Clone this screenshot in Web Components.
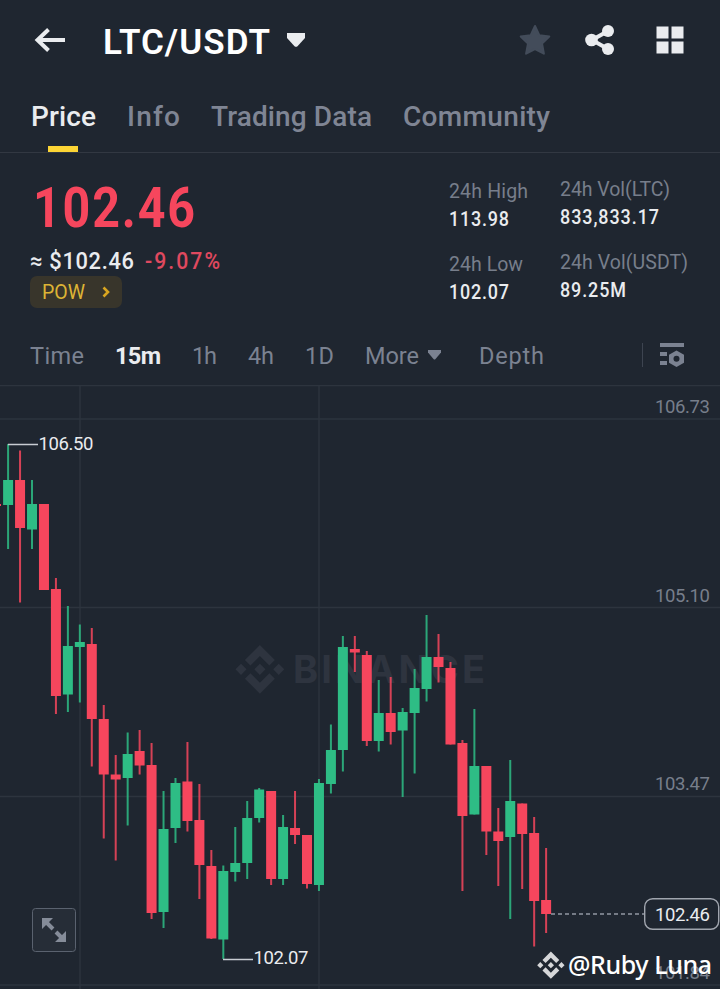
<!DOCTYPE html>
<html lang="en">
<head>
<meta charset="utf-8">
<title>LTC/USDT</title>
<style>
  body {
    margin: 0;
    background: #1f2630;
    font-family: Roboto, "Liberation Sans", sans-serif;
  }
</style>
</head>
<body>
<pair-screen></pair-screen>
<script>
// Text set to a given width: the slack goes between the letters.
// "condense" narrows the glyphs themselves.
class FitText extends HTMLElement {
  constructor() {
    super();
    this.attachShadow({ mode: "open" });
  }

  connectedCallback() {
    this.shadowRoot.innerHTML = `
      <style>
        :host {
          display: block;
          flex: none;
          white-space: nowrap;
        }

        span {
          display: inline-block;
          transform-origin: 0 50%;
        }
      </style>
      <span></span>
    `;
    const span = this.shadowRoot.querySelector("span");
    const text = this.getAttribute("text");
    const width = Number(this.getAttribute("width"));
    const condense = Number(this.getAttribute("condense") || 1);
    span.textContent = text;
    const natural = span.getBoundingClientRect().width;
    span.style.letterSpacing = `${(width / condense - natural) / (text.length - 1)}px`;
    span.style.transform = condense === 1 ? "none" : `scaleX(${condense})`;
    this.style.width = `${width}px`;
  }
}

const icons = {
  back: [32, 26, `<path d="M31 13H3M14.500 2.500L3.500 13l11 10.500" fill="none" stroke="#eaecef" stroke-width="4"/>`],
  down: [18, 14, `<path d="M0 0h18v5l-7.500 8.200q-1.500 1.300-3 0L0 5z" fill="#eaecef"/>`],
  star: [32, 32, `<path d="M16 2l4.300 9.200 10 1.300-7.300 7 1.900 10.200L16 25l-8.900 4.700L9 19.500l-7.300-7 10-1.300z" fill="#434c5a" stroke="#434c5a" stroke-width="2" stroke-linejoin="round"/>`],
  share: [30, 32, `<path d="M23 7L7 16l16 9" fill="none" stroke="#eaecef" stroke-width="4"/><g fill="#eaecef"><circle cx="23" cy="7" r="6"/><circle cx="6.500" cy="16" r="6.300"/><circle cx="23" cy="25" r="6"/></g>`],
  grid: [28, 28, `<path d="M.500.500h12v12H.500zM15.500.500h12v12h-12zM.500 15.500h12v12H.500zM15.500 15.500h12v12h-12z" fill="#eaecef"/>`],
  chevron: [8, 12, `<path d="M1.500 1.500L6 6l-4.500 4.500" fill="none" stroke="#d9a520" stroke-width="2.600"/>`],
  more: [13, 10, `<path d="M0 0h13v2.500L7.500 9q-1 1-2 0L0 2.500z" fill="#7b8291"/>`],
  settings: [24, 24, `<g fill="#7b8291"><path d="M0 0h24v4H0zM0 9h7v4H0zM0 18h7v4H0z"/><path fill-rule="evenodd" d="M16.500 7.500L24 11.700v8L16.500 24 9 19.700v-8zM16.500 12.700a3 3 0 1 0 0 6 3 3 0 0 0 0-6z"/></g>`],
  expand: [44, 44, `<rect x=".5" y=".5" width="43" height="43" rx="3" fill="#262d37" stroke="#5a626f"/><path d="M12 12l9 9M24 24l8 8" stroke="#858c99" stroke-width="4" fill="none"/><path d="M10 10h11L10 21zM34 34H23l11-11z" fill="#858c99"/>`],
};

class PairIcon extends HTMLElement {
  constructor() {
    super();
    this.attachShadow({ mode: "open" });
  }

  connectedCallback() {
    const [w, h, shape] = icons[this.getAttribute("name")];
    this.shadowRoot.innerHTML = `
      <style>
        :host {
          display: block;
          flex: none;
        }

        svg {
          display: block;
        }
      </style>
      <svg width="${w}" height="${h}" viewBox="0 0 ${w} ${h}">${shape}</svg>
    `;
  }
}

class PairHeader extends HTMLElement {
  constructor() {
    super();
    this.attachShadow({ mode: "open" });
  }

  connectedCallback() {
    this.shadowRoot.innerHTML = `
      <style>
        :host {
          display: flex;
          align-items: center;
          height: 80px;
          padding: 0 36px 0 34px;
        }

        .title {
          margin: 5px 17px 0 37px;
          color: #fff;
          font-size: 35px;
          font-weight: 600;
          line-height: 41px;
        }

        .tools {
          display: flex;
          align-items: center;
          gap: 34px;
          margin-left: auto;
        }
      </style>
      <pair-icon name="back"></pair-icon>
      <fit-text class="title" text="LTC/USDT" width="167"></fit-text>
      <pair-icon name="down"></pair-icon>
      <div class="tools">
        <pair-icon name="star"></pair-icon>
        <pair-icon name="share"></pair-icon>
        <pair-icon name="grid" style="margin-left: 7px"></pair-icon>
      </div>
    `;
  }
}

class PairTabs extends HTMLElement {
  constructor() {
    super();
    this.attachShadow({ mode: "open" });
  }

  connectedCallback() {
    this.shadowRoot.innerHTML = `
      <style>
        :host {
          display: flex;
          gap: 31px;
          box-sizing: border-box;
          height: 73px;
          padding: 20px 0 0 31px;
          border-bottom: 1px solid #323842;
          color: #7f8594;
          font-size: 28px;
          font-weight: 500;
          line-height: 33px;
        }

        .active {
          display: flex;
          flex-direction: column;
          justify-content: space-between;
          color: #eaecef;
        }

        i {
          width: 30px;
          height: 6px;
          margin-left: 17px;
          background: #fcd535;
        }
      </style>
      <div class="active"><fit-text text="Price" width="65"></fit-text><i></i></div>
      <fit-text text="Info" width="53"></fit-text>
      <fit-text text="Trading Data" width="161"></fit-text>
      <fit-text text="Community" width="147"></fit-text>
    `;
  }
}

class PairStat extends HTMLElement {
  constructor() {
    super();
    this.attachShadow({ mode: "open" });
  }

  connectedCallback() {
    const [label, labelWidth, value, valueWidth] = this.getAttribute("data").split("|");
    this.shadowRoot.innerHTML = `
      <style>
        :host {
          display: block;
          line-height: 28px;
        }

        .label {
          color: #777e8b;
          font-size: 19.500px;
        }

        .value {
          color: #eaecef;
          font-size: 19.500px;
          font-weight: 500;
        }
      </style>
      <fit-text class="label" text="${label}" width="${labelWidth}"></fit-text>
      <fit-text class="value" text="${value}" width="${valueWidth}" condense=".92"></fit-text>
    `;
  }
}

class PairSummary extends HTMLElement {
  constructor() {
    super();
    this.attachShadow({ mode: "open" });
  }

  connectedCallback() {
    this.shadowRoot.innerHTML = `
      <style>
        :host {
          display: flex;
          justify-content: space-between;
          box-sizing: border-box;
          height: 172px;
          padding: 22px 32px 0 30px;
        }

        .price {
          margin-left: 3px;
          color: #f6465d;
          font-size: 55px;
          font-weight: 700;
          line-height: 66px;
        }

        .change {
          display: flex;
          gap: 11px;
          margin-top: 6px;
          font-size: 23.500px;
          font-weight: 500;
          line-height: 28px;
          color: #eaecef;
        }

        .down {
          color: #e0495f;
        }

        .badge {
          display: flex;
          align-items: center;
          gap: 17px;
          box-sizing: border-box;
          width: 92px;
          height: 32px;
          margin-top: 1px;
          padding-left: 12px;
          border-radius: 7px;
          background: #38352b;
          color: #ddb435;
          font-size: 19.500px;
        }

        .stats {
          display: flex;
          gap: 32px;
          padding-top: 1px;
        }

        .stats > div {
          display: flex;
          flex-direction: column;
          gap: 17px;
        }

        .first {
          padding-top: 1.500px;
        }
      </style>
      <div>
        <fit-text class="price" text="102.46" width="162" condense=".88"></fit-text>
        <div class="change">
          <fit-text text="≈ $102.46" width="104" condense=".93"></fit-text>
          <fit-text class="down" text="-9.07%" width="75" condense=".9"></fit-text>
        </div>
        <div class="badge">
          <fit-text text="POW" width="43"></fit-text>
          <pair-icon name="chevron"></pair-icon>
        </div>
      </div>
      <div class="stats">
        <div class="first">
          <pair-stat data="24h High|79|113.98|60"></pair-stat>
          <pair-stat data="24h Low|74|102.07|60"></pair-stat>
        </div>
        <div>
          <pair-stat data="24h Vol(LTC)|110|833,833.17|99"></pair-stat>
          <pair-stat data="24h Vol(USDT)|128|89.25M|66"></pair-stat>
        </div>
      </div>
    `;
  }
}

class IntervalBar extends HTMLElement {
  constructor() {
    super();
    this.attachShadow({ mode: "open" });
  }

  connectedCallback() {
    this.shadowRoot.innerHTML = `
      <style>
        :host {
          display: flex;
          align-items: center;
          gap: 31px;
          height: 60px;
          padding: 0 36px 0 30px;
          color: #7b8291;
          font-size: 23.500px;
          line-height: 30px;
        }

        fit-text {
          padding-top: 2px;
        }

        .active {
          color: #eaecef;
          font-weight: 700;
        }

        .more {
          display: flex;
          align-items: center;
          gap: 9px;
          margin-right: 7px;
        }

        .settings {
          display: flex;
          align-items: center;
          gap: 17px;
          margin-left: auto;
        }

        hr {
          width: 1px;
          height: 24px;
          margin: 0;
          border: 0;
          background: #3d4450;
        }
      </style>
      <fit-text text="Time" width="54"></fit-text>
      <fit-text class="active" text="15m" width="46"></fit-text>
      <fit-text text="1h" width="25"></fit-text>
      <fit-text text="4h" width="26"></fit-text>
      <fit-text text="1D" width="29"></fit-text>
      <div class="more"><fit-text text="More" width="54"></fit-text><pair-icon name="more"></pair-icon></div>
      <fit-text text="Depth" width="65"></fit-text>
      <div class="settings"><hr><pair-icon name="settings"></pair-icon></div>
    `;
  }
}

// [up, wick top, body top, body bottom, wick bottom]
const candles = [
  [1, 444, 480, 505, 549],
  [0, 450.5, 480, 528, 602.5],
  [1, 480, 504, 529.5, 549],
  [0, 504, 504, 590, 590],
  [0, 578, 589, 696, 714],
  [1, 606, 646, 694.5, 712],
  [1, 624.5, 642, 647, 702.5],
  [0, 628, 644, 719, 766.5],
  [0, 705, 719, 774.5, 838.5],
  [0, 755, 774.5, 779.5, 860.5],
  [1, 732.5, 754, 778, 825.5],
  [0, 730, 751, 765.5, 774.5],
  [0, 743, 765, 913, 919],
  [1, 791, 829, 912, 928],
  [1, 778, 783, 828, 843],
  [0, 742, 781.5, 821, 831.5],
  [0, 784, 820, 865, 899],
  [0, 850, 866, 938.5, 939],
  [1, 865.5, 871, 939.5, 959],
  [1, 827, 863, 872, 881.5],
  [1, 801, 818, 863, 879],
  [1, 788, 789.5, 818, 822.5],
  [0, 791, 791, 879, 885],
  [1, 815, 827, 879, 885],
  [0, 791, 828, 835, 844],
  [0, 835, 835, 884, 888.5],
  [1, 779, 783, 885, 891],
  [1, 724.5, 750, 784, 793.5],
  [1, 636, 647, 750, 771.5],
  [0, 636, 649, 652.5, 672],
  [0, 651, 655, 741, 746],
  [1, 680, 713, 741, 751.5],
  [0, 677, 713, 732, 744.5],
  [1, 708, 712, 730.5, 797],
  [1, 669, 688, 713, 773.5],
  [1, 615, 657, 689, 701.5],
  [0, 634, 657, 667, 682.5],
  [0, 662, 668, 744.5, 744.5],
  [0, 740, 743, 816, 891],
  [1, 709, 766, 814.5, 814.5],
  [0, 766, 766, 831.5, 855],
  [0, 808, 831.5, 841, 886],
  [1, 760, 801, 837, 919],
  [0, 803.5, 803.5, 834, 889],
  [0, 817, 833, 901, 946.5],
  [0, 848, 900, 914, 933],
];

const logo = `<path d="M38.730 53.200l24.590-24.580 24.600 24.600 14.300-14.310L63.320 0l-38.900 38.900zM0 63.310L14.300 49l14.310 14.310-14.310 14.300zM38.730 73.410L63.320 98l24.600-24.600 14.310 14.290-38.910 38.910-38.910-38.880zM98 63.310L112.300 49l14.310 14.300-14.310 14.320zM77.830 63.300L63.320 48.780 48.810 63.300l14.510 14.500z"/>`;

class CandleChart extends HTMLElement {
  constructor() {
    super();
    this.attachShadow({ mode: "open" });
  }

  connectedCallback() {
    const bars = candles.map(([up, high, top, bottom, low], i) => {
      const x = 8.1 + i * 11.956;
      return `
        <g fill="${up ? "#2ebd85" : "#f6465d"}">
          <rect x="${x - 1}" y="${high}" width="2" height="${low - high}" opacity=".85"/>
          <rect x="${x - 5}" y="${top}" width="10" height="${bottom - top}"/>
        </g>`;
    }).join("");
    const scale = [["106.73", 413], ["105.10", 602], ["103.47", 790], ["101.84", 979]]
      .map(([text, y]) => `<text x="655" y="${y}" textLength="55">${text}</text>`).join("");

    this.shadowRoot.innerHTML = `
      <style>
        :host {
          display: block;
          position: relative;
          height: 604px;
        }

        svg {
          display: block;
          font-size: 18.500px;
        }

        .expand {
          position: absolute;
          left: 32px;
          top: 523px;
        }
      </style>
      <svg width="720" height="604" viewBox="0 385 720 604">
        <path d="M0 385.500H720M0 419H720M0 607.500H720M0 796.500H720M0 985H720M80 385V989M319 385V989" stroke="#2d343e" stroke-width="1.400"/>
        <g fill="#2e343f">
          <g transform="translate(235.500 645) scale(.385)">${logo}</g>
          <text x="293" y="683" textLength="192" font-family="Inter" font-size="38" font-weight="700">BINANCE</text>
        </g>
        <g fill="#777e8b">${scale}</g>
        <rect x="0" y="504" width="1" height="2" fill="#f6465d"/>
        ${bars}
        <path d="M8 444.500H38M223 959.500H253" stroke="#c8ccd2" stroke-width="1.300"/>
        <g fill="#eaecef">
          <text x="38.500" y="450" textLength="55">106.50</text>
          <text x="253.500" y="964" textLength="55">102.07</text>
        </g>
        <path d="M551 914H644" stroke="#9298a2" stroke-width="1.300" stroke-dasharray="4 3"/>
        <rect x="644.700" y="898.700" width="74" height="30.600" rx="8" fill="#1f2630" stroke="#a0a5ae" stroke-width="1.400"/>
        <text x="655" y="921" textLength="55" fill="#eaecef">102.46</text>
        <g transform="translate(537.200 951.500) scale(.216)" fill="#d6d7d9">${logo}</g>
        <text x="568" y="974" textLength="144" font-family="Noto Sans" font-size="25" font-weight="500" fill="#fff">@Ruby Luna</text>
      </svg>
      <pair-icon class="expand" name="expand"></pair-icon>
    `;
  }
}

class PairScreen extends HTMLElement {
  constructor() {
    super();
    this.attachShadow({ mode: "open" });
  }

  connectedCallback() {
    this.shadowRoot.innerHTML = `
      <style>
        :host {
          display: flex;
          flex-direction: column;
          width: 720px;
          height: 989px;
          overflow: hidden;
        }
      </style>
      <pair-header></pair-header>
      <pair-tabs></pair-tabs>
      <pair-summary></pair-summary>
      <interval-bar></interval-bar>
      <candle-chart></candle-chart>
    `;
  }
}

customElements.define("fit-text", FitText);
customElements.define("pair-icon", PairIcon);
customElements.define("pair-header", PairHeader);
customElements.define("pair-tabs", PairTabs);
customElements.define("pair-stat", PairStat);
customElements.define("pair-summary", PairSummary);
customElements.define("interval-bar", IntervalBar);
customElements.define("candle-chart", CandleChart);
customElements.define("pair-screen", PairScreen);
</script>
</body>
</html>
